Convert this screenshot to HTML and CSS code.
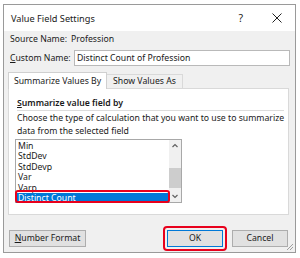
FILE: index.html
```html
<!DOCTYPE html>
<html>
<head>
<meta charset="utf-8">
<link rel="stylesheet" href="styles.css">
</head>
<body>
<div class="dialog">
  <div class="titlebar">
    <span class="title">Value Field Settings</span>
    <span class="tb-help">?</span>
    <svg class="tb-close" width="10" height="10" viewBox="0 0 10 10"><path d="M0.5 0.5 L9.5 9.5 M9.5 0.5 L0.5 9.5" stroke="#222" stroke-width="1" fill="none"/></svg>
  </div>
  <div class="content">
    <div class="row src">
      <span class="lbl">Source Name:</span>
      <span class="val">Profession</span>
    </div>
    <div class="row cust">
      <span class="lbl"><u>C</u>ustom Name:</span>
      <div class="input">Distinct Count of Profession</div>
    </div>
    <div class="tabs">
      <div class="tab active">Summarize Values By</div>
      <div class="tab">Show Values As</div>
    </div>
    <div class="panel">
      <div class="heading"><u>S</u>ummarize value field by</div>
      <div class="sep"></div>
      <div class="desc">Choose the type of calculation that you want to use to summarize<br>data from the selected field</div>
      <div class="list">
        <div class="items">
          <div class="item">Min</div>
          <div class="item">StdDev</div>
          <div class="item">StdDevp</div>
          <div class="item">Var</div>
          <div class="item">Varp</div>
          <div class="item sel">Distinct Count</div>
        </div>
        <div class="scroll">
          <svg class="arr" width="12" height="12" viewBox="0 0 12 12"><path d="M3.5 7 L6 4.5 L8.5 7" stroke="#606060" stroke-width="1.2" fill="none"/></svg>
          <div class="track"><div class="thumb"></div></div>
          <svg class="arr" width="12" height="12" viewBox="0 0 12 12"><path d="M3.5 5 L6 7.5 L8.5 5" stroke="#606060" stroke-width="1.2" fill="none"/></svg>
        </div>
        <div class="hl"></div>
      </div>
    </div>
    <div class="buttons">
      <div class="btn numfmt"><u>N</u>umber Format</div>
      <div class="spacer"></div>
      <div class="btn ok">OK<div class="hl-ok"></div></div>
      <div class="btn cancel">Cancel</div>
    </div>
  </div>
  <svg class="grip" width="8" height="8" viewBox="0 0 8 8"><path d="M7 1 L1 7 M7 4 L4 7" stroke="#a0a0a0" stroke-width="1"/></svg>
</div>
</body>
</html>
```
FILE: styles.css
```css
html, body { margin: 0; padding: 0; background: #ffffff; }
body { font-family: "Noto Sans", "Open Sans", sans-serif; font-size: 8.7px; color: #1a1a1a; white-space: nowrap; }
.dialog {
  position: relative;
  margin: 4px 0 0 3px;
  width: 293px;
  height: 249px;
  border: 1px solid #9a9a9a;
  background: #f0f0f0;
  box-sizing: border-box;
  display: flex;
  flex-direction: column;
}
.titlebar {
  height: 26px;
  background: #ffffff;
  display: flex;
  align-items: center;
  padding: 0 0 0 7px;
  flex: none;
}
.title { font-size: 9.2px; flex: 1; }
.tb-help { font-size: 10.5px; margin-right: 29px; color: #222; }
.tb-close { margin-right: 13px; }
.content { padding: 0 6px 0 4px; display: flex; flex-direction: column; }
.row { display: flex; align-items: center; padding-left: 2px; }
.src { height: 16px; }
.src .lbl { width: 61px; flex: none; }
.cust { margin-top: 3px; height: 16px; }
.cust .lbl { width: 64px; flex: none; }
.input {
  flex: 1;
  margin-right: -1px;
  height: 16px;
  box-sizing: border-box;
  border: 1px solid #b9b9b9;
  background: #fff;
  padding-left: 2px;
  line-height: 14px;
}
.tabs { display: flex; margin-top: 6px; align-items: flex-end; height: 16px; }
.tab {
  box-sizing: border-box;
  height: 14px;
  width: 76px;
  border: 1px solid #d9d9d9;
  border-bottom: none;
  border-left: none;
  background: #f0f0f0;
  text-align: center;
  line-height: 13px;
}
.tab.active { height: 17px; background: #fff; width: 99px; line-height: 16px; margin-bottom: -1px; position: relative; z-index: 1; border-color: #d0d0d0; border-left: 1px solid #d0d0d0; }
.panel {
  background: #fff;
  border: 1px solid #d9d9d9;
  height: 127px;
  box-sizing: border-box;
  padding: 8px 6px 0 6px;
}
.heading { font-weight: 600; height: 13px; line-height: 13px; padding-left: 2px; }
.sep { height: 1px; background: #dcdcdc; margin: 0 0 1px 2px; width: 267px; }
.desc { line-height: 13px; padding-left: 2px; }
.list {
  position: relative;
  margin-top: 1px;
  width: 167px;
  height: 64px;
  box-sizing: border-box;
  border: 1px solid #a8a8a8;
  display: flex;
}
.items { flex: 1; padding-top: 1px; }
.item { height: 10.4px; line-height: 10.4px; padding-left: 2px; }
.item.sel { background: #0078d7; color: #fff; }
.scroll { width: 12px; display: flex; flex-direction: column; background: #f0f0f0; }
.arr { flex: none; width: 12px; height: 12px; }
.track { flex: 1; position: relative; }
.thumb { position: absolute; left: 0; right: 0; top: 16px; height: 20px; background: #cdcdcd; }
.hl {
  position: absolute;
  left: -1px;
  top: 50px;
  width: 155px;
  height: 13px;
  border: 2px solid #e8001c;
  border-radius: 3px;
  box-sizing: border-box;
}
.buttons { display: flex; margin-top: 15px; padding-left: 1px; }
.btn {
  box-sizing: border-box;
  height: 17px;
  border: 1px solid #adadad;
  background: #e1e1e1;
  text-align: center;
  line-height: 15px;
}
.numfmt { width: 77px; }
.spacer { flex: 1; }
.ok { width: 56px; position: relative; border-color: #0078d7; margin-right: 9px; }
.cancel { width: 56px; margin-right: 1px; }
.hl-ok {
  position: absolute;
  left: -5px; top: -5px; right: -5px; bottom: -5px;
  border: 2px solid #e8001c;
  border-radius: 4px;
}
.grip { position: absolute; right: 1px; bottom: 1px; }
```
